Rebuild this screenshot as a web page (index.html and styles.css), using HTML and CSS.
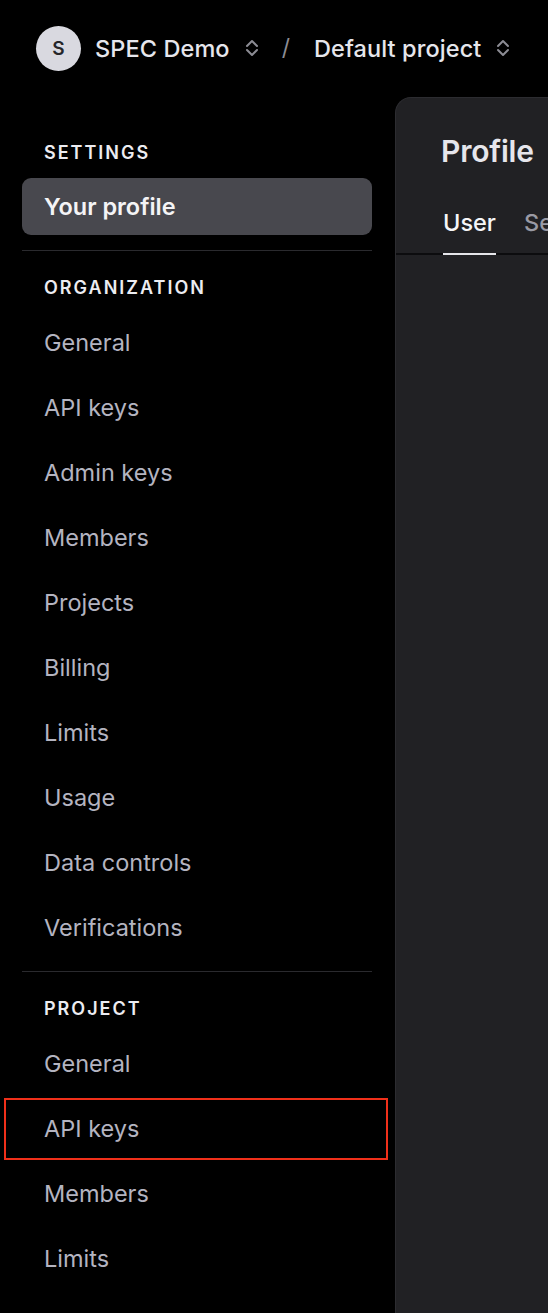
FILE: index.html
```html
<!DOCTYPE html>
<html lang="en">
<head>
<meta charset="utf-8">
<title>Settings – Your profile</title>
<link rel="stylesheet" href="styles.css">
</head>
<body>
<header class="topbar">
  <div class="avatar">S</div>
  <span class="crumb">SPEC Demo</span>
  <svg class="selector" viewBox="0 0 14 18" width="14" height="18" aria-hidden="true"><path d="M2 7 L7 2 L12 7 M2 11 L7 16 L12 11" fill="none" stroke="currentColor" stroke-width="2" stroke-linecap="round" stroke-linejoin="round"/></svg>
  <span class="slash">/</span>
  <span class="crumb">Default project</span>
  <svg class="selector" viewBox="0 0 14 18" width="14" height="18" aria-hidden="true"><path d="M2 7 L7 2 L12 7 M2 11 L7 16 L12 11" fill="none" stroke="currentColor" stroke-width="2" stroke-linecap="round" stroke-linejoin="round"/></svg>
</header>
<div class="layout">
  <nav class="sidebar">
    <div class="section-label">Settings</div>
    <a class="nav-item active">Your profile</a>
    <hr class="divider">
    <div class="section-label">Organization</div>
    <ul class="nav-list">
      <li class="nav-item">General</li>
      <li class="nav-item">API keys</li>
      <li class="nav-item">Admin keys</li>
      <li class="nav-item">Members</li>
      <li class="nav-item">Projects</li>
      <li class="nav-item">Billing</li>
      <li class="nav-item">Limits</li>
      <li class="nav-item">Usage</li>
      <li class="nav-item">Data controls</li>
      <li class="nav-item">Verifications</li>
    </ul>
    <hr class="divider">
    <div class="section-label">Project</div>
    <ul class="nav-list">
      <li class="nav-item">General</li>
      <li class="nav-item marked">API keys</li>
      <li class="nav-item">Members</li>
      <li class="nav-item">Limits</li>
    </ul>
  </nav>
  <main class="panel">
    <h1 class="panel-title">Profile</h1>
    <div class="tabs">
      <span class="tab active">User</span>
      <span class="tab">Security</span>
      <span class="tab">Notifications</span>
    </div>
  </main>
</div>
</body>
</html>
```
FILE: styles.css
```css
* { box-sizing: border-box; }
html, body {
  margin: 0;
  padding: 0;
  background: #000;
  height: 100%;
  overflow: hidden;
}
body {
  font-family: Inter, "Liberation Sans", Arial, sans-serif;
  color: #ececf1;
}

.topbar {
  height: 97px;
  display: flex;
  align-items: center;
  padding-left: 36px;
  padding-bottom: 1px;
}
.avatar {
  width: 45px;
  height: 45px;
  border-radius: 50%;
  background: #d9d9e0;
  color: #26262a;
  font-size: 19px;
  font-weight: 600;
  display: flex;
  align-items: center;
  justify-content: center;
  margin-right: 14px;
}
.crumb {
  font-size: 23.5px;
  font-weight: 500;
  color: #e6e6ec;
  letter-spacing: 0.1px;
}
.selector {
  color: #8c8c94;
  margin-left: 15px;
  display: block;
}
.slash {
  color: #8c8c94;
  font-size: 23px;
  margin: 0 24px 0 23px;
}

.layout {
  display: flex;
  align-items: stretch;
  height: calc(100% - 97px);
}

.sidebar {
  width: 372px;
  flex: none;
  padding: 44px 0 0 22px;
  display: flex;
  flex-direction: column;
}
.section-label {
  height: 24px;
  line-height: 24px;
  font-size: 18px;
  font-weight: 600;
  text-transform: uppercase;
  letter-spacing: 2px;
  color: #ececf1;
  padding-left: 22px;
  margin-bottom: 13px;
}
.nav-list {
  list-style: none;
  margin: 0;
  padding: 0;
  display: flex;
  flex-direction: column;
  gap: 8px;
}
.nav-item {
  position: relative;
  display: flex;
  align-items: center;
  height: 57px;
  padding-left: 22px;
  font-size: 23.5px;
  font-weight: 400;
  color: #b4b4c0;
  border-radius: 9px;
}
.nav-item.active {
  background: #48484e;
  color: #f4f4f6;
  font-weight: 600;
}
.nav-item.marked::after {
  content: "";
  position: absolute;
  left: -18px;
  right: -16px;
  top: -2px;
  bottom: -3px;
  border: 2px solid #f0301a;
}
.divider {
  border: 0;
  height: 1px;
  background: #2a2a2e;
  margin: 15px 0 25px 0;
}
.section-label + .nav-list { margin-top: 1px; }

.panel {
  flex: 1;
  margin-left: 23px;
  background: #212124;
  border-top-left-radius: 16px;
  border-left: 1px solid #2c2c30;
  border-top: 1px solid #2c2c30;
  overflow: hidden;
}
.panel-title {
  margin: 0;
  padding: 35px 0 0 45px;
  font-size: 30px;
  line-height: 36px;
  font-weight: 600;
  color: #e6e6ec;
  letter-spacing: -0.2px;
  white-space: nowrap;
}
.tabs {
  margin-top: 40px;
  display: flex;
  gap: 28px;
  padding-left: 47px;
  border-bottom: 2px solid #0c0c0e;
  white-space: nowrap;
}
.tab {
  font-size: 23.5px;
  line-height: 28px;
  font-weight: 500;
  color: #9a9aa4;
  padding-bottom: 16px;
  margin-bottom: -2px;
  border-bottom: 2px solid transparent;
}
.tab.active {
  color: #f6f6f8;
  border-bottom-color: #e6e6ea;
}
```
